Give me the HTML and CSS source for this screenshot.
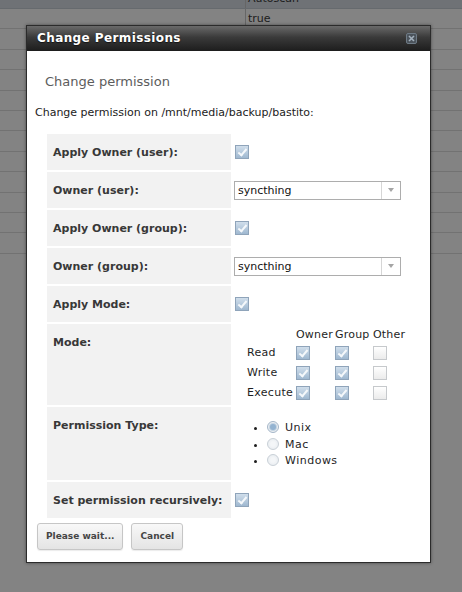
FILE: index.html
```html
<!DOCTYPE html>
<html>
<head>
<meta charset="utf-8">
<title>Change Permissions</title>
<link rel="stylesheet" href="styles.css">
</head>
<body>
<div class="page">
  <div class="bgrow bghead"><span class="bgcell-l"></span><span class="bgcell-r">Autoscan</span></div>
  <div class="bgrow"><span class="bgcell-l"></span><span class="bgcell-r">true</span></div>
  <div class="bgrow"></div>
  <div class="bgrow"></div>
  <div class="bgrow"></div>
  <div class="bgrow"></div>
  <div class="bgrow"></div>
  <div class="bgrow"></div>
  <div class="bgrow"></div>
  <div class="bgrow"></div>
  <div class="bgrow"></div>
  <div class="bgrow"></div>
  <div class="bgrow"></div>
</div>

<div class="dialog">
  <div class="titlebar">
    <span class="title">Change Permissions</span>
    <svg class="close" width="11" height="11" viewBox="0 0 11 11">
      <rect x="0.5" y="0.5" width="10" height="10" rx="1.5" fill="#4b535b" stroke="#6f7b86"/>
      <path d="M3 3 L8 8 M8 3 L3 8" stroke="#a3b0bc" stroke-width="1.6"/>
    </svg>
  </div>
  <div class="content">
    <h2 class="heading">Change permission</h2>
    <p class="path">Change permission on /mnt/media/backup/bastito:</p>
    <div class="form">
      <div class="label">Apply Owner (user):</div>
      <div class="value"><span class="cb checked"></span></div>

      <div class="label">Owner (user):</div>
      <div class="value"><div class="select"><span class="select-text">syncthing</span><span class="select-arrow"></span></div></div>

      <div class="label">Apply Owner (group):</div>
      <div class="value"><span class="cb checked"></span></div>

      <div class="label">Owner (group):</div>
      <div class="value"><div class="select"><span class="select-text">syncthing</span><span class="select-arrow"></span></div></div>

      <div class="label">Apply Mode:</div>
      <div class="value"><span class="cb checked"></span></div>

      <div class="label">Mode:</div>
      <div class="value value-top">
        <div class="perm-grid">
          <span></span><span class="col-h">Owner</span><span class="col-h">Group</span><span class="col-h">Other</span>
          <span class="perm-label">Read</span><span class="cb checked"></span><span class="cb checked"></span><span class="cb"></span>
          <span class="perm-label">Write</span><span class="cb checked"></span><span class="cb checked"></span><span class="cb"></span>
          <span class="perm-label">Execute</span><span class="cb checked"></span><span class="cb checked"></span><span class="cb"></span>
        </div>
      </div>

      <div class="label">Permission Type:</div>
      <div class="value value-top">
        <ul class="radios">
          <li><span class="radio checked"></span>Unix</li>
          <li><span class="radio"></span>Mac</li>
          <li><span class="radio"></span>Windows</li>
        </ul>
      </div>

      <div class="label">Set permission recursively:</div>
      <div class="value"><span class="cb checked"></span></div>
    </div>
    <div class="buttons">
      <button class="btn">Please wait...</button>
      <button class="btn">Cancel</button>
    </div>
  </div>
</div>
</body>
</html>
```

FILE: styles.css
```css
html, body {
  margin: 0;
  padding: 0;
}
body {
  width: 462px;
  height: 592px;
  overflow: hidden;
  background: #838383;
  font-family: "DejaVu Sans", Verdana, sans-serif;
  font-size: 11px;
  color: #222;
  position: relative;
}

/* dimmed background page */
.page {
  margin-top: -11px;
}
.bgrow {
  box-sizing: border-box;
  height: 20.4px;
  border-bottom: 1px solid #727272;
  display: flex;
  line-height: 19px;
  color: #1c1c1c;
}
.bghead {
  height: 20px;
  background: #6f7276;
  border-bottom-color: #666a6e;
}
.bgcell-l {
  width: 246px;
  border-right: 1px solid #666;
  box-sizing: border-box;
}
.bgcell-r {
  padding-left: 2px;
}

/* dialog */
.dialog {
  position: absolute;
  left: 26px;
  top: 25px;
  width: 403px;
  background: #fff;
  border: 1px solid #2b2b2b;
  box-shadow: 0 0 3px rgba(0, 0, 0, 0.45);
}
.titlebar {
  height: 25px;
  background: linear-gradient(#6a6a6a, #3a3a3a 45%, #1d1d1d);
  display: flex;
  align-items: center;
  justify-content: space-between;
  padding: 0 13px 0 10px;
}
.title {
  color: #fff;
  font-weight: bold;
  font-size: 12px;
  line-height: 14px;
  margin-top: -2px;
  text-shadow: 0 1px 1px rgba(0, 0, 0, 0.6);
  letter-spacing: 0.4px;
}
.close {
  display: block;
  margin-top: -1px;
}
.content {
  padding: 0 8px 12px;
}
.heading {
  margin: 23px 0 0 10px;
  font-size: 13px;
  line-height: 16px;
  font-weight: normal;
  color: #5c5c5c;
}
.path {
  margin: 16px 0 0;
  line-height: 14px;
  color: #222;
}

.form {
  display: grid;
  grid-template-columns: 184px 1fr;
  gap: 2px;
  margin: 14px 0 0 12px;
}
.label {
  background: #f2f2f2;
  padding: 12px 6px 11px;
  line-height: 13px;
  font-weight: bold;
  color: #383838;
  white-space: nowrap;
}
.value {
  display: flex;
  align-items: center;
  padding-left: 1px;
}
.value-top {
  align-items: flex-start;
}

/* checkbox */
.cb {
  position: relative;
  display: inline-block;
  box-sizing: border-box;
  width: 14px;
  height: 14px;
  border: 1px solid #c6c9cc;
  background: linear-gradient(#ffffff, #ebebeb);
}
.cb.checked {
  border-color: #8fa4ba;
  background: linear-gradient(#d0deeb, #9fb8d0);
}
.cb.checked::after {
  content: "";
  position: absolute;
  left: 4px;
  top: 1px;
  width: 3px;
  height: 7px;
  border-right: 2px solid #f5f8fb;
  border-bottom: 2px solid #f5f8fb;
  transform: rotate(40deg);
}
.value > .cb {
  margin-left: 1px;
}

/* select */
.select {
  box-sizing: border-box;
  width: 167px;
  height: 19px;
  border: 1px solid #adadad;
  display: flex;
  align-items: center;
  background: #fff;
}
.select-text {
  flex: 1;
  padding-left: 3px;
  color: #111;
  line-height: 17px;
}
.select-arrow {
  width: 18px;
  height: 17px;
  border-left: 1px solid #d6d6d6;
  display: flex;
  align-items: center;
  justify-content: center;
}
.select-arrow::before {
  content: "";
  border-left: 3.5px solid transparent;
  border-right: 3.5px solid transparent;
  border-top: 4px solid #a5a5a5;
}

/* mode grid */
.perm-grid {
  display: grid;
  grid-template-columns: 49px 39px 38px 30px;
  grid-template-rows: 16px repeat(3, 20px);
  align-items: center;
  margin: 3px 0 2px 13px;
  color: #1e1e1e;
}
.col-h,
.perm-label {
  line-height: 14px;
  letter-spacing: 0.3px;
}
.col-h {
  letter-spacing: 0.2px;
}

/* radios */
.radios {
  margin: 13px 0 10px;
  padding-left: 33px;
  list-style: disc;
  color: #1e1e1e;
}
.radios li {
  line-height: 16.5px;
  letter-spacing: 0.5px;
}
.radio {
  position: relative;
  display: inline-block;
  vertical-align: -2px;
  box-sizing: border-box;
  width: 12px;
  height: 12px;
  border-radius: 50%;
  border: 1px solid #c9d0d7;
  background: radial-gradient(circle, #f4f6f8 30%, #e4e9ee);
  margin-right: 6px;
}
.radio.checked {
  border-color: #a4b6c8;
}
.radio.checked::after {
  content: "";
  position: absolute;
  left: 2px;
  top: 2px;
  width: 6px;
  height: 6px;
  border-radius: 50%;
  background: #93b3d1;
  box-shadow: 0 0 0 1px #c3d3e2;
}

/* buttons */
.buttons {
  display: flex;
  gap: 8px;
  margin: 5px 0 0 2px;
}
.btn {
  height: 27px;
  padding: 0 8px;
  border: 1px solid #c6c6c6;
  border-radius: 3px;
  background: linear-gradient(#f8f8f8, #e4e4e4);
  box-shadow: 0 1px 1px rgba(0, 0, 0, 0.08);
  font-family: "DejaVu Sans", Verdana, sans-serif;
  font-size: 9px;
  font-weight: bold;
  color: #454545;
}
```
